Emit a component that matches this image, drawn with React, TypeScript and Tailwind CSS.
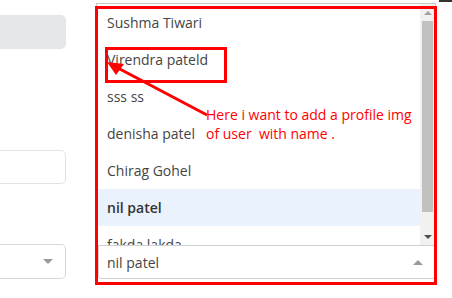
import React from 'react'

const users = ['Sushma Tiwari', 'Virendra pateld', 'sss ss', 'denisha patel', 'Chirag Gohel', 'nil patel', 'fakda lakda']

export default function App() {
  const selected = 'nil patel'

  return (
    <div
      className="relative w-[452px] h-[298px] bg-white overflow-hidden flex"
      style={{ fontFamily: '"Open Sans", "Noto Sans", sans-serif' }}
    >
      {/* left form column, cut off by the screenshot */}
      <div className="w-[66px] flex flex-col shrink-0">
        <div className="mt-[15px] h-[34px] bg-[#e4e7ea] rounded-r-[5px]" />
        <div className="mt-[101px] h-[34px] border border-l-0 border-[#dfe3e7] rounded-r-[5px] bg-white" />
        <div className="mt-[60px] h-[35px] border border-l-0 border-[#d4d8dc] rounded-r-[5px] bg-white flex items-center justify-end pr-[12px]">
          <span className="w-0 h-0 border-l-[5px] border-r-[5px] border-t-[5px] border-l-transparent border-r-transparent border-t-[#9a9a9a]" />
        </div>
      </div>

      {/* select2-style dropdown */}
      <div className="ml-[30px] w-[340px] pt-[3px] flex flex-col shrink-0">
        <div className="h-[242px] border border-b-0 border-[#c8c8c8] flex overflow-hidden">
          <ul className="flex-1 overflow-hidden text-[14px] text-[#444]">
            {users.map((u) => (
              <li
                key={u}
                className={
                  u === selected
                    ? 'h-[37px] flex items-center pl-[10px] bg-[#eaf3fd] font-semibold text-[#333]'
                    : 'h-[37px] flex items-center pl-[10px]'
                }
              >
                {u}
              </li>
            ))}
          </ul>
          {/* scrollbar */}
          <div className="w-[15px] bg-[#f1f1f1] flex flex-col items-center">
            <div className="h-[17px] flex items-center justify-center">
              <span className="w-0 h-0 border-l-[4px] border-r-[4px] border-b-[4px] border-l-transparent border-r-transparent border-b-[#a3a3a3]" />
            </div>
            <div className="w-[11px] h-[191px] bg-[#c1c1c1]" />
            <div className="flex-1 flex items-end justify-center pb-[6px]">
              <span className="w-0 h-0 border-l-[4px] border-r-[4px] border-t-[4px] border-l-transparent border-r-transparent border-t-[#505050]" />
            </div>
          </div>
        </div>
        <div className="ml-[2px] h-[34px] border border-[#d0d0d0] rounded-b-[3px] bg-white flex items-center justify-between pl-[8px] pr-[12px] text-[14px] text-[#444]">
          <span>{selected}</span>
          <span className="w-0 h-0 border-l-[5px] border-r-[5px] border-b-[5px] border-l-transparent border-r-transparent border-b-[#9a9a9a]" />
        </div>
      </div>

      {/* top right dark edge */}
      <div className="absolute right-0 top-0 w-[13px] h-[2px] bg-[#333]" />

      {/* red annotation overlay */}
      <div className="absolute left-[95px] top-[6px] w-[342px] h-[279px] border-[3px] border-[#ff0000] pointer-events-none" />
      <div className="absolute left-[105px] top-[47px] w-[122px] h-[36px] border-[3px] border-[#ff0000] pointer-events-none" />
      <svg className="absolute left-0 top-0 pointer-events-none" width="452" height="298">
        <line x1="207" y1="115" x2="116" y2="67" stroke="#ff0000" strokeWidth="3" />
        <polygon points="107,62 124,64 116,75" fill="#ff0000" />
      </svg>
      <div
        className="absolute left-[206px] top-[105px] text-[14px] leading-[19px] text-[#ff0000] whitespace-pre"
        style={{ fontFamily: '"Open Sans", sans-serif' }}
      >
        {'Here i want to add a profile img\nof user  with name .'}
      </div>
    </div>
  )
}
